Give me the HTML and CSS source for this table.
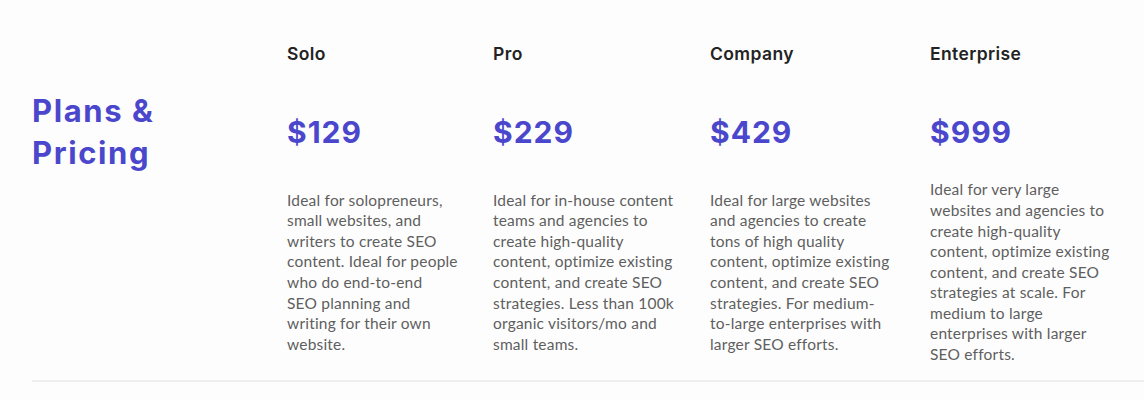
FILE: index.html
```html
<!DOCTYPE html>
<html>
<head>
<meta charset="utf-8">
<link rel="stylesheet" href="styles.css">
</head>
<body>
<section class="pricing">
  <div class="grid">
    <div class="cell"></div>
    <div class="cell plan">Solo</div>
    <div class="cell plan">Pro</div>
    <div class="cell plan">Company</div>
    <div class="cell plan">Enterprise</div>

    <div class="cell title">Plans &amp;<br>Pricing</div>
    <div class="cell price">$129</div>
    <div class="cell price">$229</div>
    <div class="cell price">$429</div>
    <div class="cell price">$999</div>

    <div class="cell"></div>
    <p class="cell desc">Ideal for solopreneurs,<br>small websites, and<br>writers to create SEO<br>content. Ideal for people<br>who do end-to-end<br>SEO planning and<br>writing for their own<br>website.</p>
    <p class="cell desc">Ideal for in-house content<br>teams and agencies to<br>create high-quality<br>content, optimize existing<br>content, and create SEO<br>strategies. Less than 100k<br>organic visitors/mo and<br>small teams.</p>
    <p class="cell desc">Ideal for large websites<br>and agencies to create<br>tons of high quality<br>content, optimize existing<br>content, and create SEO<br>strategies. For medium-<br>to-large enterprises with<br>larger SEO efforts.</p>
    <p class="cell desc">Ideal for very large<br>websites and agencies to<br>create high-quality<br>content, optimize existing<br>content, and create SEO<br>strategies at scale. For<br>medium to large<br>enterprises with larger<br>SEO efforts.</p>
  </div>
</section>
</body>
</html>
```
FILE: styles.css
```css
html, body {
  margin: 0;
  padding: 0;
  background: #fdfdfd;
}
body {
  font-family: "Lato", "Liberation Sans", sans-serif;
}
.pricing {
  padding: 0 0 0 32px;
}
.grid {
  display: grid;
  grid-template-columns: 255px 206px 217px 220px 1fr;
  grid-template-rows: 106px 52px 222px;
  align-items: center;
  border-bottom: 2px solid #efefef;
}
.cell {
  margin: 0;
}
.plan {
  font-family: "Inter", sans-serif;
  font-weight: 600;
  font-size: 17.5px;
  letter-spacing: 0.4px;
  color: #232323;
}
.title {
  font-family: "Inter", sans-serif;
  font-weight: 700;
  font-size: 31px;
  line-height: 42px;
  letter-spacing: 1.6px;
  color: #4b47cc;
}
.price {
  font-family: "Inter", sans-serif;
  font-weight: 700;
  font-size: 30px;
  letter-spacing: 1px;
  color: #4b47cc;
}
.desc {
  margin-top: 6px;
  font-size: 15.5px;
  line-height: 20.6px;
  letter-spacing: 0.2px;
  color: #5f5f5f;
  white-space: nowrap;
}
```
